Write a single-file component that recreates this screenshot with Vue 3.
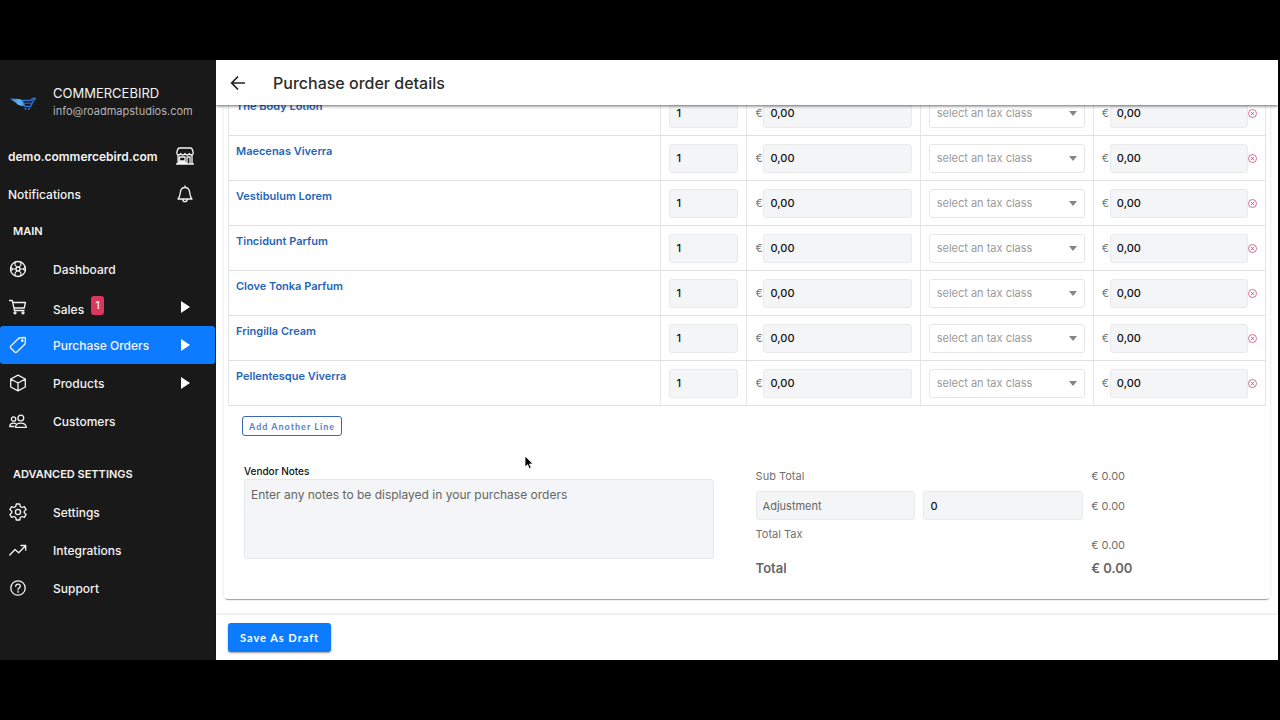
<script setup>
import { ref } from 'vue'

const mainNav = [
  { name: 'Dashboard', icon: 'wheel' },
  { name: 'Sales', icon: 'cart', badge: '1', arrow: true },
  { name: 'Purchase Orders', icon: 'tag', arrow: true, active: true },
  { name: 'Products', icon: 'box', arrow: true },
  { name: 'Customers', icon: 'people' },
]
const advancedNav = [
  { name: 'Settings', icon: 'gear' },
  { name: 'Integrations', icon: 'trend' },
  { name: 'Support', icon: 'help' },
]
const groups = [
  { title: 'MAIN', items: mainNav },
  { title: 'ADVANCED SETTINGS', items: advancedNav },
]

const lines = ref(
  [
    'The Body Lotion',
    'Maecenas Viverra',
    'Vestibulum Lorem',
    'Tincidunt Parfum',
    'Clove Tonka Parfum',
    'Fringilla Cream',
    'Pellentesque Viverra',
  ].map((name) => ({ name, qty: '1', price: '0,00', tax: '', amount: '0,00' }))
)
const adjustment = ref('0')
const adjustmentLabel = ref('Adjustment')
const notes = ref('')
</script>

<template>
  <div class="screen">
    <div class="window">
      <aside class="sidebar">
        <div class="profile">
          <svg class="logo" viewBox="0 0 26 14" aria-hidden="true">
            <defs>
              <linearGradient id="wing" x1="0" x2="1">
                <stop offset="0" stop-color="#2f78d8" />
                <stop offset="0.6" stop-color="#62b4ee" />
                <stop offset="1" stop-color="#2f78d8" />
              </linearGradient>
            </defs>
            <path d="M0 1.500 L9 2 Q13 2.500 13.500 5 L15.500 9.500 Q10 9 7.500 7.500 L5.500 5.500 L3 4 Z" fill="url(#wing)" />
            <path d="M12 3.500 H20.500 L22.500 1.500 H25.500 L23.500 3.500 L20.500 9.500 H14.500" fill="none" stroke="#2f6fd6" stroke-width="1.500" />
            <path d="M13.500 6.200 H21.500" stroke="#2f6fd6" fill="none" />
            <circle cx="15.500" cy="12" r="1" fill="#2f6fd6" />
            <circle cx="19" cy="12" r="1" fill="#2f6fd6" />
          </svg>
          <div class="who">
            <div class="company">COMMERCEBIRD</div>
            <div class="email">info@roadmapstudios.com</div>
          </div>
        </div>
        <a href="#" class="row site">
          <span>demo.commercebird.com</span>
          <svg viewBox="0 0 18 18" class="icon">
            <path d="M3.500 1 H14.500 Q16 1 16.500 3 L17.300 6 Q17 8 15.500 8 Q14 8 13.300 6.500 Q12.600 8 11.200 8 Q9.700 8 9 6.500 Q8.300 8 6.800 8 Q5.400 8 4.700 6.500 Q4 8 2.500 8 Q1 8 .7 6 L1.500 3 Q2 1 3.500 1 Z" />
            <path d="M2 8 V17 M16 8 V17 M.5 17 H17.500 M3.500 10 H9 V14 H3.500 Z M11 17 V10 H14 V17 M5 14 V17 M8 14 V17 M2 15.500 H11" />
          </svg>
        </a>
        <a href="#" class="row">
          <span>Notifications</span>
          <svg viewBox="0 0 18 18" class="icon">
            <path d="M2 14 C4 12 4 10 4.300 7.500 C4.600 4.500 6.500 2.500 9 2.500 C11.500 2.500 13.400 4.500 13.700 7.500 C14 10 14 12 16 14 Z M9 2.500 V1 M6.700 14 C6.700 17.600 11.300 17.600 11.300 14" />
          </svg>
        </a>
        <nav v-for="g in groups" :key="g.title" class="group">
          <h2>{{ g.title }}</h2>
          <a v-for="i in g.items" :key="i.name" href="#" class="item" :class="{ active: i.active }">
            <svg viewBox="0 0 18 18" class="icon">
              <template v-if="i.icon === 'wheel'">
                <circle cx="9" cy="9" r="7.500" />
                <circle cx="9" cy="9" r="2" />
                <path d="M7.900 7.200 L6 5 L6.300 2.200 M10.100 7.200 L12 5 L11.700 2.200 M7 9 H4 L1.800 7.500 M4 9 L1.800 10.700 M11 9 H14 L16.200 7.500 M14 9 L16.200 10.700 M7.900 10.800 L6 13 L6.300 15.800 M10.100 10.800 L12 13 L11.700 15.800" stroke-width="1.100" />
              </template>
              <template v-else-if="i.icon === 'cart'">
                <path d="M.5 2.500 H3.300 L5.500 12.500 H15 M3.700 4.500 H16.500 L15.200 10 H5" />
                <circle cx="6" cy="14.800" r="1" />
                <circle cx="14" cy="14.800" r="1" />
              </template>
              <template v-else-if="i.icon === 'tag'">
                <path d="M10 2 L15.300 1.500 Q16.500 1.500 16.500 2.700 L16 8 L7.500 16.200 Q6.700 16.800 6 16.200 L1.500 11.700 Q1 11 1.600 10.300 Z" />
                <circle cx="13.300" cy="4.700" r="0.700" />
              </template>
              <path v-else-if="i.icon === 'box'" d="M9 1.200 L16.300 5 V13 L9 16.800 L1.700 13 V5 Z M1.700 5 L9 9 L16.300 5 M9 9 V16.800" />
              <template v-else-if="i.icon === 'people'">
                <circle cx="11.800" cy="6" r="2.900" />
                <circle cx="4.600" cy="7" r="2.200" />
                <path d="M6.500 15.300 C6.700 12.500 9 11.200 11.800 11.200 C14.600 11.200 17 12.500 17.300 15.300 Z M5 14.500 H.7 C.8 12.300 2.500 11.200 4.600 11.200 Q6 11.200 6.800 11.700" />
              </template>
              <template v-else-if="i.icon === 'gear'">
                <circle cx="9" cy="9" r="2.600" />
                <path d="M7.300 1 H10.700 L11.300 3.500 L13 4.500 L15.400 3.700 L17.100 6.600 L15.200 8.300 V9.700 L17.100 11.400 L15.400 14.300 L13 13.500 L11.300 14.500 L10.700 17 H7.300 L6.700 14.500 L5 13.500 L2.600 14.300 L.9 11.400 L2.800 9.700 V8.300 L.9 6.600 L2.600 3.700 L5 4.500 L6.700 3.500 Z" />
              </template>
              <path v-else-if="i.icon === 'trend'" d="M.8 14 L6 8.500 L9.700 11.700 L16.500 4.700 M12 4.500 H16.700 V9.200" />
              <template v-else>
                <circle cx="9" cy="9" r="7.200" />
                <path d="M6.700 7.300 C6.700 4.300 11.300 4.300 11.300 7.200 C11.300 8.900 9 8.900 9 10.600 M9 12.200 V13.300" />
              </template>
            </svg>
            <span class="name" :class="{ low: i.badge }">{{ i.name }}</span>
            <span v-if="i.badge" class="badge">{{ i.badge }}</span>
            <svg v-if="i.arrow" class="arrow" viewBox="0 0 9 12"><path d="M0 0 L9 6 L0 12 Z" /></svg>
          </a>
        </nav>
      </aside>

      <main class="main">
        <header class="topbar">
          <button class="back" aria-label="Back">
            <svg viewBox="0 0 16 16"><path d="M15 8 H2 M8 1.500 L1.700 8 L8 14.500" /></svg>
          </button>
          <h1>Purchase order details</h1>
        </header>

        <div class="scroller">
          <section class="card">
            <table>
              <colgroup>
                <col class="c-name" /><col class="c-qty" /><col class="c-mid" /><col class="c-mid" /><col />
              </colgroup>
              <tbody>
                <tr v-for="(l, n) in lines" :key="n">
                  <td class="product"><a href="#">{{ l.name }}</a></td>
                  <td><input v-model="l.qty" aria-label="Quantity" /></td>
                  <td>
                    <label class="money"><span>€</span><input v-model="l.price" aria-label="Price" /></label>
                  </td>
                  <td>
                    <div class="select">
                      <select v-model="l.tax" aria-label="Tax class">
                        <option value="">select an tax class</option>
                      </select>
                    </div>
                  </td>
                  <td>
                    <div class="money">
                      <span>€</span><input v-model="l.amount" aria-label="Amount" />
                      <button class="remove" aria-label="Remove line">
                        <svg viewBox="0 0 9 9"><circle cx="4.500" cy="4.500" r="4" /><path d="M3 3 L6 6 M6 3 L3 6" /></svg>
                      </button>
                    </div>
                  </td>
                </tr>
              </tbody>
            </table>
            <button class="add">Add Another Line</button>
            <div class="lower">
              <div class="notes">
                <label for="notes">Vendor Notes</label>
                <textarea id="notes" v-model="notes" placeholder="Enter any notes to be displayed in your purchase orders"></textarea>
              </div>
              <div class="totals">
                <span class="wide">Sub Total</span><span>€ 0.00</span>
                <input v-model="adjustmentLabel" class="muted" aria-label="Adjustment name" />
                <input v-model="adjustment" aria-label="Adjustment amount" />
                <span>€ 0.00</span>
                <span class="wide tax">Total Tax</span><span class="tax-value">€ 0.00</span>
                <strong class="wide">Total</strong><strong>€ 0.00</strong>
              </div>
            </div>
          </section>
        </div>

        <footer class="actions">
          <button class="save">Save As Draft</button>
        </footer>
      </main>
    </div>
    <svg class="pointer" viewBox="0 0 10 15" aria-hidden="true">
      <path d="M1 1 V12 L3.600 9.700 L5.300 13.600 L7.200 12.700 L5.500 9 H9 Z" fill="#000" stroke="#fff" stroke-width="0.800" />
    </svg>
  </div>
</template>

<style>
body {
  margin: 0;
  background: #000;
}
</style>

<style scoped>
.screen {
  box-sizing: border-box;
  height: 100vh;
  padding: 60px 2px 60px 0;
  background: #000;
  position: relative;
  font-family: Inter, "Liberation Sans", sans-serif;
  font-size: 12px;
  overflow: hidden;
}
.screen *, .screen *::after { box-sizing: border-box; }
button, input, select, textarea { font: inherit; margin: 0; }
button { cursor: pointer; }
a { text-decoration: none; color: inherit; }
.window { display: flex; height: 100%; }

.sidebar {
  width: 216px;
  flex: none;
  background: #191919;
  color: #f4f4f4;
  font-weight: 500;
}
.profile { display: flex; padding: 24px 0 17px 10px; gap: 17px; align-items: center; }
.logo { width: 26px; height: 14px; margin-top: 4px; }
.company { font-size: 13px; line-height: 18px; font-weight: 400; }
.email { font-size: 11px; line-height: 18px; font-weight: 400; color: #b4b4b4; }
.icon { width: 18px; height: 18px; flex: none; fill: none; stroke: #f4f4f4; stroke-width: 1.3; stroke-linejoin: round; stroke-linecap: round; }
.row { display: flex; height: 38px; align-items: center; justify-content: space-between; padding: 0 22px 0 8px; }
.site { font-weight: 600; }
.group { margin-bottom: 16px; }
h2 { margin: 0; height: 37px; line-height: 37px; padding-left: 13px; font-size: 11px; font-weight: 600; }
.item { display: flex; align-items: center; height: 38px; padding: 0 26px 0 9px; border-radius: 3px; }
.item.active { background: #0d7bff; margin-right: 1px; padding-right: 25px; }
.name { margin-left: 26px; }
.name.low { padding-top: 4px; }
.badge { margin: -4px 0 0 7px; width: 13px; line-height: 19px; border-radius: 3px; background: #dc3560; font-size: 11px; text-align: center; }
.arrow { width: 9px; height: 12px; margin-left: auto; fill: #fff; }

.main { flex: 1; min-width: 0; display: flex; flex-direction: column; background: #fff; }
.topbar {
  position: relative;
  z-index: 1;
  flex: none;
  display: flex;
  align-items: center;
  height: 45px;
  padding-left: 14px;
  gap: 27px;
  background: #fff;
  box-shadow: 0 1px 3px rgba(0, 0, 0, 0.6);
  clip-path: inset(0 0 -6px 0);
}
.back { border: 0; background: none; padding: 0; width: 16px; height: 16px; }
.back svg { display: block; width: 16px; height: 16px; fill: none; stroke: #222; stroke-width: 1.7; }
h1 { margin: 0; font-size: 16px; font-weight: 500; color: #2b2b2b; }

.scroller {
  flex: 1;
  min-height: 0;
  overflow: hidden;
  display: flex;
  flex-direction: column;
  justify-content: flex-end;
  padding: 0 8px 16px;
}
.card {
  flex: none;
  padding: 0 4px 22px;
  border-radius: 4px;
  box-shadow: 0 2px 1px -1px rgba(0, 0, 0, 0.35), 0 0 3px rgba(0, 0, 0, 0.14);
}
table { width: 100%; table-layout: fixed; border-collapse: separate; border-spacing: 0; border-left: 1px solid #e6e6e6; }
.c-name { width: 41.7%; }
.c-qty { width: 8.3%; }
.c-mid { width: 16.7%; }
td { height: 45px; padding: 0 8px; border-bottom: 1px solid #dfdfdf; border-right: 1px solid #e6e6e6; }
.product { vertical-align: top; padding: 7px 7px 0; line-height: 16px; font-size: 11px; font-weight: 600; color: #1f66b8; }
input {
  display: block;
  width: 100%;
  min-width: 0;
  height: 29px;
  padding: 0 6px;
  border: 1px solid #e8eaeb;
  border-radius: 3px;
  background: #f3f5f6;
  color: #111;
  font-size: 11px;
  font-weight: 500;
}
.money { display: flex; align-items: center; color: #777; font-size: 11px; }
.money span { flex: none; width: 8px; }
.remove { flex: none; border: 0; background: none; padding: 0; width: 9px; height: 9px; }
.remove svg { display: block; width: 9px; height: 9px; fill: none; stroke: #d6477a; stroke-width: 0.8; }
.select { position: relative; }
.select::after {
  content: "";
  position: absolute;
  right: 8px;
  top: 12px;
  border: 4px solid transparent;
  border-top: 5px solid #858585;
  border-bottom: 0;
}
select { appearance: none; display: block; width: 100%; height: 29px; padding: 0 7px; border: 1px solid #e6e6e6; border-radius: 3px; background: #fff; color: #9a9a9a; font-size: 11px; }

.add {
  display: block;
  margin: 10px 0 0 14px;
  height: 20px;
  padding: 0 6px;
  border: 1px solid #3867b4;
  border-radius: 3px;
  background: #fff;
  color: #5b7fc0;
  font-family: Lato, "Liberation Sans", sans-serif;
  font-size: 9px;
  font-weight: 700;
  letter-spacing: 1px;
}
.lower { display: grid; grid-template-columns: 46fr 50fr; gap: 42px; padding: 28px 0 0 16px; }
.notes label { display: block; line-height: 15px; font-size: 10px; font-weight: 500; color: #111; }
textarea { display: block; width: 100%; height: 80px; padding: 7px 6px; resize: none; border: 1px solid #e6e8e9; border-radius: 3px; background: #f3f5f6; line-height: 16px; }
textarea::placeholder { color: #666; opacity: 1; }
.totals {
  display: grid;
  grid-template-columns: 160fr 160fr 175fr;
  grid-template-rows: 17px 29px 25px 18px;
  gap: 7px 8px;
  align-items: center;
  padding-top: 3px;
  font-size: 11px;
  color: #707070;
}
.wide { grid-column: span 2; }
.tax { align-self: start; }
.tax-value { align-self: end; }
.totals strong { font-size: 13px; font-weight: 600; color: #666; }
.muted { color: #666; font-weight: 400; }

.actions { flex: none; height: 45px; padding: 8px 12px; background: #fff; box-shadow: 0 -1px 3px rgba(0, 0, 0, 0.12); }
.save {
  height: 29px;
  padding: 0 12px;
  border: 0;
  border-radius: 3px;
  background: #0d7bff;
  color: #fff;
  font-family: Lato, "Liberation Sans", sans-serif;
  font-size: 11px;
  font-weight: 700;
  letter-spacing: 1px;
  box-shadow: 0 1px 2px rgba(0, 0, 0, 0.4);
}
.pointer { position: absolute; left: 524px; top: 455px; width: 10px; height: 15px; }
</style>
